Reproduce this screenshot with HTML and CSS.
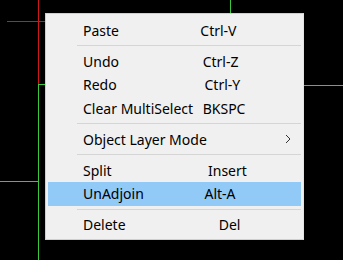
FILE: index.html
```html
<!DOCTYPE html>
<html>
<head>
<meta charset="utf-8">
<link rel="stylesheet" href="styles.css">
</head>
<body>
<div class="canvas">
  <div class="ln red v1"></div>
  <div class="ln red h1"></div>
  <div class="ln green h2"></div>
  <div class="ln green v2"></div>
  <div class="ln green h3"></div>
  <div class="ln green v3"></div>
  <div class="ln green h4"></div>

  <div class="menu">
    <div class="item"><span class="label">Paste</span><span class="key k0">Ctrl-V</span></div>
    <div class="sep"></div>
    <div class="item"><span class="label">Undo</span><span class="key k2">Ctrl-Z</span></div>
    <div class="item"><span class="label">Redo</span><span class="key k4">Ctrl-Y</span></div>
    <div class="item"><span class="label">Clear MultiSelect</span><span class="key k2">BKSPC</span></div>
    <div class="sep"></div>
    <div class="item sub"><span class="label">Object Layer Mode</span>
      <svg class="arrow" width="6" height="10" viewBox="0 0 6 10"><polyline points="1,1 5,5 1,9" fill="none" stroke="#333" stroke-width="1"/></svg>
    </div>
    <div class="sep"></div>
    <div class="item"><span class="label">Split</span><span class="key k8">Insert</span></div>
    <div class="item hl"><span class="label">UnAdjoin</span><span class="key k4">Alt-A</span></div>
    <div class="sep"></div>
    <div class="item"><span class="label">Delete</span><span class="key k18">Del</span></div>
  </div>
</div>
</body>
</html>
```

FILE: styles.css
```css
html, body {
  margin: 0;
  padding: 0;
  background: #000;
}
.canvas {
  position: relative;
  width: 343px;
  height: 260px;
  overflow: hidden;
  background: #000;
  font-family: "Segoe UI", "Noto Sans", sans-serif;
  font-size: 14px;
  color: #000;
}
.ln { position: absolute; }
.red { background: #d01818; }
.green { background: #3cc83c; }
.v1 { left: 38px; top: 0; width: 1px; height: 84px; }
.h1 { left: 7px; top: 21px; width: 38px; height: 1px; }
.h2 { left: 39px; top: 84px; width: 7px; height: 1px; }
.v2 { left: 38px; top: 84px; width: 1px; height: 176px; }
.h3 { left: 0; top: 181px; width: 38px; height: 1px; }
.v3 { left: 230px; top: 0; width: 1px; height: 14px; }
.h4 { left: 303px; top: 85px; width: 40px; height: 1px; }

.menu {
  position: absolute;
  left: 45px;
  top: 13px;
  width: 259px;
  box-sizing: border-box;
  background: #f0f0f0;
  border: 1px solid #cfcfcf;
  border-right-color: #e4e4e4;
  padding: 4.5px 2px 2px 2px;
}
.item {
  display: flex;
  align-items: center;
  height: 23.5px;
  line-height: 23.5px;
  white-space: nowrap;
}
.item.hl { background: #91c9f7; }
.label {
  width: 117px;
  padding-left: 35px;
  flex: none;
}
.key { flex: none; }
.k0 { padding-left: 0.3px; }
.k2 { padding-left: 2.7px; }
.k4 { padding-left: 4.5px; }
.k8 { padding-left: 8px; }
.k18 { padding-left: 18.7px; }
.sub .arrow {
  margin-left: auto;
  margin-right: 10px;
  flex: none;
}
.sep {
  height: 1px;
  margin: 3.25px 0 3.25px 29px;
  background: #d5d5d5;
}
```
